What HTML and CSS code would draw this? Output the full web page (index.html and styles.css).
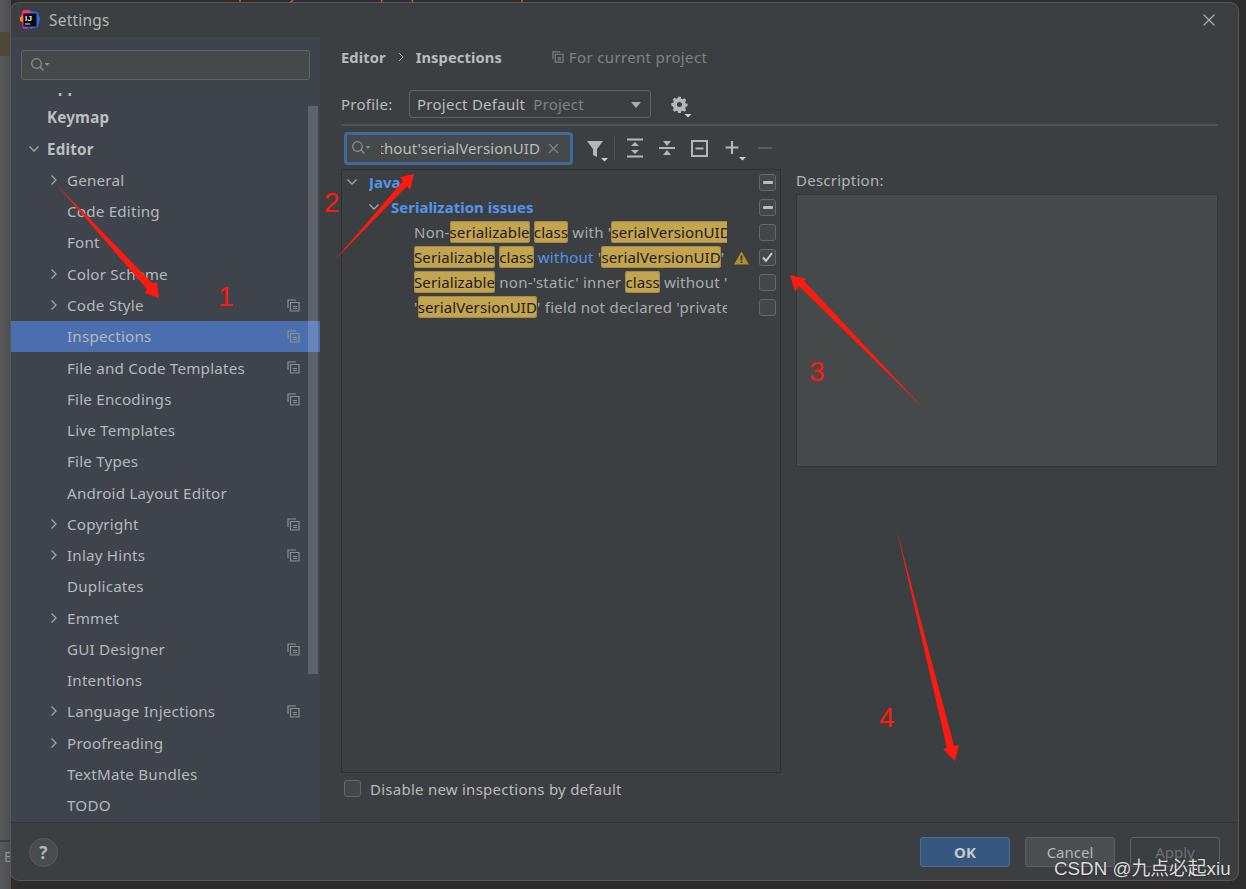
FILE: index.html
```html
<!DOCTYPE html>
<html lang="en">
<head>
<meta charset="utf-8">
<title>Settings</title>
<link rel="stylesheet" href="styles.css">
</head>
<body>
<div class="desk">
  <svg class="backdrop" width="1246" height="889" viewBox="0 0 1246 889">
    <rect x="0" y="32" width="11" height="24" fill="#4c4836"/>
    <path d="M240 0v3M293 0l-3 3M382 0l-1 3M412 0l1 3M522 0v3" stroke="#b5722f" stroke-width="1.5" fill="none"/>
    <path d="M0 841H11" stroke="#2b2d2e"/>
  </svg>
  <span class="stray">B</span>
  <div class="window">
    <header class="titlebar">
      <svg class="logo" width="20" height="20" viewBox="0 0 20 20">
        <path d="M3 0h6l3 2-9 14-1-4-2-1 1-5z" fill="#f0347c"/>
        <path d="M10 1l7 1 3 6-2 9-7 2-3-2z" fill="#2f6be8"/>
        <path d="M0 7l3-1v6l-3-1z" fill="#f58a1f"/>
        <path d="M2 15l5-2 1 6-5 0z" fill="#a535c9"/>
        <rect x="3.500" y="3.500" width="13" height="13" fill="#0b0b0b"/>
        <text x="5" y="11" class="logo-text">IJ</text>
        <rect x="5" y="13.500" width="5" height="1" fill="#e8e8e8"/>
      </svg>
      <span class="title">Settings</span>
      <svg class="close" width="14" height="14" viewBox="0 0 14 14"><path d="M1.500 1.500l11 11M12.500 1.500l-11 11" stroke="#a9abac" stroke-width="1.300" fill="none"/></svg>
    </header>
    <div class="main">
      <aside class="sidebar">
        <div class="side-search">
          <svg width="20" height="16" viewBox="0 0 20 16"><circle cx="6.500" cy="6.500" r="4.800" stroke="#8b8f91" stroke-width="1.200" fill="none"/><path d="M10 10l3.500 3.500" stroke="#8b8f91" stroke-width="1.300"/><path d="M14.500 6h5l-2.500 3z" fill="#8b8f91"/></svg>
        </div>
        <div class="tree-clip">
          <div class="thumb"></div>
          <ul class="tree">
            <li class="row top"><span class="label">Appearance &amp; Behavior</span></li>
            <li class="row top"><span class="label">Keymap</span></li>
            <li class="row top exp"><svg class="chev" viewBox="0 0 12 12"><path d="M1.500 3.500L6 8l4.500-4.500"/></svg><span class="label">Editor</span></li>
            <li class="row sub"><svg class="chev" viewBox="0 0 12 12"><path d="M3.500 1.500L8 6l-4.500 4.500"/></svg><span class="label">General</span></li>
            <li class="row leaf"><span class="label">Code Editing</span></li>
            <li class="row leaf"><span class="label">Font</span></li>
            <li class="row sub"><svg class="chev" viewBox="0 0 12 12"><path d="M3.500 1.500L8 6l-4.500 4.500"/></svg><span class="label">Color Scheme</span></li>
            <li class="row sub"><svg class="chev" viewBox="0 0 12 12"><path d="M3.500 1.500L8 6l-4.500 4.500"/></svg><span class="label">Code Style</span><svg class="copy" viewBox="0 0 13 13"><path d="M1 9V1h8"/><path d="M3.500 3.500h8.500v8.500H3.500z"/><path d="M6 7.500h4M6 9.500h4"/></svg></li>
            <li class="row leaf selected"><span class="label">Inspections</span><svg class="copy" viewBox="0 0 13 13"><path d="M1 9V1h8"/><path d="M3.500 3.500h8.500v8.500H3.500z"/><path d="M6 7.500h4M6 9.500h4"/></svg></li>
            <li class="row leaf"><span class="label">File and Code Templates</span><svg class="copy" viewBox="0 0 13 13"><path d="M1 9V1h8"/><path d="M3.500 3.500h8.500v8.500H3.500z"/><path d="M6 7.500h4M6 9.500h4"/></svg></li>
            <li class="row leaf"><span class="label">File Encodings</span><svg class="copy" viewBox="0 0 13 13"><path d="M1 9V1h8"/><path d="M3.500 3.500h8.500v8.500H3.500z"/><path d="M6 7.500h4M6 9.500h4"/></svg></li>
            <li class="row leaf"><span class="label">Live Templates</span></li>
            <li class="row leaf"><span class="label">File Types</span></li>
            <li class="row leaf"><span class="label">Android Layout Editor</span></li>
            <li class="row sub"><svg class="chev" viewBox="0 0 12 12"><path d="M3.500 1.500L8 6l-4.500 4.500"/></svg><span class="label">Copyright</span><svg class="copy" viewBox="0 0 13 13"><path d="M1 9V1h8"/><path d="M3.500 3.500h8.500v8.500H3.500z"/><path d="M6 7.500h4M6 9.500h4"/></svg></li>
            <li class="row sub"><svg class="chev" viewBox="0 0 12 12"><path d="M3.500 1.500L8 6l-4.500 4.500"/></svg><span class="label">Inlay Hints</span><svg class="copy" viewBox="0 0 13 13"><path d="M1 9V1h8"/><path d="M3.500 3.500h8.500v8.500H3.500z"/><path d="M6 7.500h4M6 9.500h4"/></svg></li>
            <li class="row leaf"><span class="label">Duplicates</span></li>
            <li class="row sub"><svg class="chev" viewBox="0 0 12 12"><path d="M3.500 1.500L8 6l-4.500 4.500"/></svg><span class="label">Emmet</span></li>
            <li class="row leaf"><span class="label">GUI Designer</span><svg class="copy" viewBox="0 0 13 13"><path d="M1 9V1h8"/><path d="M3.500 3.500h8.500v8.500H3.500z"/><path d="M6 7.500h4M6 9.500h4"/></svg></li>
            <li class="row leaf"><span class="label">Intentions</span></li>
            <li class="row sub"><svg class="chev" viewBox="0 0 12 12"><path d="M3.500 1.500L8 6l-4.500 4.500"/></svg><span class="label">Language Injections</span><svg class="copy" viewBox="0 0 13 13"><path d="M1 9V1h8"/><path d="M3.500 3.500h8.500v8.500H3.500z"/><path d="M6 7.500h4M6 9.500h4"/></svg></li>
            <li class="row sub"><svg class="chev" viewBox="0 0 12 12"><path d="M3.500 1.500L8 6l-4.500 4.500"/></svg><span class="label">Proofreading</span></li>
            <li class="row leaf"><span class="label">TextMate Bundles</span></li>
            <li class="row leaf"><span class="label">TODO</span></li>
          </ul>
        </div>
      </aside>
      <section class="content">
        <div class="crumbs">
          <b>Editor</b>
          <svg class="crumb-sep" width="6" height="10" viewBox="0 0 6 10"><path d="M1 1l4 4-4 4" stroke="#aaa" fill="none"/></svg>
          <b>Inspections</b>
          <span class="scope"><svg class="scope-icon" viewBox="0 0 13 13"><path d="M1 9V1h8"/><path d="M3.500 3.500h8.500v8.500H3.500z"/><path d="M6 7.500h4M6 9.500h4"/></svg>For current project</span>
        </div>
        <div class="profile">
          <span class="profile-label">Profile:</span>
          <div class="combo"><span>Project Default</span><span class="dim">Project</span><i class="caret"></i></div>
          <svg class="gear" width="22" height="22" viewBox="0 0 22 22">
            <path fill="#b4b7b9" fill-rule="evenodd" d="M9 2h3l.5 2.200 1.500.6 2-1.200 2 2-1.200 2 .6 1.500 2.100.5v3l-2.100.5-.6 1.500 1.200 2-2 2-2-1.200-1.500.6-.5 2.100H9l-.5-2.100-1.500-.6-2 1.200-2-2 1.200-2-.6-1.500L1.500 12V9l2.100-.5.6-1.500-1.200-2 2-2 2 1.200 1.500-.6zm1.500 5.700a2.800 2.800 0 1 0 0 5.600 2.800 2.800 0 0 0 0-5.600z" transform="translate(0 -1) scale(.9)"/>
            <path d="M14.500 18h7l-3.500 3.500z" fill="#d0d0d0"/>
          </svg>
        </div>
        <div class="rule"></div>
        <div class="toolbar">
          <div class="filter-input">
            <svg width="20" height="16" viewBox="0 0 20 16"><circle cx="6.500" cy="6.500" r="4.800" stroke="#8b8f91" stroke-width="1.200" fill="none"/><path d="M10 10l3.500 3.500" stroke="#8b8f91" stroke-width="1.300"/><path d="M14.500 6h5l-2.500 3z" fill="#8b8f91"/></svg>
            <span class="filter-clip"><span class="filter-text">Serializable class without'serialVersionUID</span></span>
            <svg class="clear" width="11" height="11" viewBox="0 0 11 11"><path d="M1 1l9 9M10 1l-9 9" stroke="#7f8385" stroke-width="1.200"/></svg>
          </div>
          <div class="tools">
            <svg width="22" height="24" viewBox="0 0 22 24"><path d="M1 3h16l-6 8v8l-4-2v-6z" fill="#b4b7b9"/><path d="M15 20h7l-3.500 3.500z" fill="#d0d0d0"/></svg>
            <span class="tool-sep"></span>
            <svg width="18" height="20" viewBox="0 0 18 20"><path d="M1 1.500h16M1 18.500h16" stroke="#b4b7b9" stroke-width="2"/><path d="M9 4l4 4H5zM9 16l4-4H5z" fill="#b4b7b9"/></svg>
            <svg width="18" height="20" viewBox="0 0 18 20"><path d="M1 10h16" stroke="#b4b7b9" stroke-width="2"/><path d="M9 8L5 3h8zM9 12l4 5H5z" fill="#b4b7b9"/></svg>
            <svg width="17" height="17" viewBox="0 0 17 17"><rect x="1" y="1" width="15" height="15" fill="none" stroke="#b4b7b9" stroke-width="2"/><path d="M4.500 8.500h8" stroke="#b4b7b9" stroke-width="2"/></svg>
            <svg width="22" height="24" viewBox="0 0 22 24"><path d="M8 3v13M1.500 9.500h13" stroke="#b4b7b9" stroke-width="2.200"/><path d="M15 19h7l-3.500 3.500z" fill="#d0d0d0"/></svg>
            <svg width="14" height="4" viewBox="0 0 14 4"><path d="M0 2h14" stroke="#5a5d5f" stroke-width="2"/></svg>
          </div>
        </div>
        <div class="panels">
          <div class="left-col">
            <div class="insp-tree">
              <div class="irow lvl0"><svg class="chev" viewBox="0 0 12 12"><path d="M1.500 3.500L6 8l4.500-4.500"/></svg><span class="ilabel blue strong">Java</span><span class="cb mixed"></span></div>
              <div class="irow lvl1"><svg class="chev" viewBox="0 0 12 12"><path d="M1.500 3.500L6 8l4.500-4.500"/></svg><span class="ilabel blue strong">Serialization issues</span><span class="cb mixed"></span></div>
              <div class="irow lvl2"><span class="ilabel">Non-<mark>serializable</mark> <mark>class</mark> with '<mark>serialVersionUID</mark>' but not Serializable</span><span class="cb"></span></div>
              <div class="irow lvl2"><span class="ilabel"><mark>Serializable</mark> <mark>class</mark> <span class="blue">without</span> '<mark>serialVersionUID</mark>'</span>
                <svg class="warn" width="15" height="14" viewBox="0 0 15 14"><path d="M7.500 .5L15 13.500H0z" fill="#b08d26"/><path d="M7.500 4.500v5M7.500 10.500v1.500" stroke="#2f2f2f" stroke-width="1.500"/></svg>
                <span class="cb"><svg width="15" height="15" viewBox="0 0 15 15"><path d="M3 7.500l3 3.500 6-8" fill="none" stroke="#c9cbcc" stroke-width="2"/></svg></span></div>
              <div class="irow lvl2"><span class="ilabel"><mark>Serializable</mark> non-'static' inner <mark>class</mark> without 'serialVersionUID'</span><span class="cb"></span></div>
              <div class="irow lvl2"><span class="ilabel">'<mark>serialVersionUID</mark>' field not declared 'private static final long'</span><span class="cb"></span></div>
            </div>
            <label class="disable"><span class="cb big"></span>Disable new inspections by default</label>
          </div>
          <div class="right-col">
            <div class="desc-label">Description:</div>
            <div class="desc-box"></div>
          </div>
        </div>
      </section>
    </div>
    <footer class="footer">
      <span class="help">?</span>
      <div class="buttons">
        <button class="btn primary">OK</button>
        <button class="btn">Cancel</button>
        <button class="btn off">Apply</button>
      </div>
    </footer>
  </div>
  <svg class="marks" width="1246" height="889" viewBox="0 0 1246 889">
    <polygon fill="#ff1a0f" points="55,183 152,283 157,283 159,298 145,293 147,289"/>
    <polygon fill="#ff1a0f" points="333,262 403,181 400,177 414,174 410,190 407,186"/>
    <polygon fill="#ff1a0f" points="925,410 799,286 795,292 790,275 806,279 804,281"/>
    <polygon fill="#ff1a0f" points="896,527 954,746 959,745 955,761 943,749 947,748"/>
  </svg>
  <span class="num n1">1</span>
  <span class="num n2">2</span>
  <span class="num n3">3</span>
  <span class="num n4">4</span>
  <span class="watermark">CSDN @九点必起xiu</span>
</div>
</body>
</html>
```
FILE: styles.css
```css
* { box-sizing: border-box; }
html, body { margin: 0; padding: 0; }
body { font-family: "Noto Sans", "Open Sans", "Noto Sans CJK SC", sans-serif; font-size: 15px; letter-spacing: .25px; color: #bbbbbb; }

.desk {
  position: relative; width: 1246px; height: 889px; overflow: hidden;
  padding: 3px 0 0 11px;
  background: linear-gradient(90deg, #56585a 0, #4c4e50 11px, #2f2d2b 11px, #2f2d2b 100%);
}
.backdrop { position: absolute; left: 0; top: 0; }
.stray { position: absolute; left: 4px; top: 847px; font-size: 14px; color: #8f9193; }

.window {
  position: relative; width: 1227px; height: 877px;
  display: flex; flex-direction: column;
  background: #3c3f41; border-radius: 8px; overflow: hidden;
  box-shadow: 0 0 0 1px #55585a;
}
.titlebar { height: 34px; flex: none; display: flex; align-items: center; padding: 0 22px 0 9px; }
.logo { flex: none; }
.logo-text { font: bold 8px "Liberation Sans", sans-serif; fill: #f2f2f2; }
.title { margin-left: 9px; font-size: 15.4px; color: #b4b6b8; }
.close { margin-left: auto; }

.main { flex: 1; min-height: 0; display: flex; }
.sidebar { width: 309px; flex: none; display: flex; flex-direction: column; background: #3e434c; }
.side-search {
  margin: 13px 10px 0; height: 30px; flex: none;
  display: flex; align-items: center; padding-left: 8px;
  background: #45494a; border: 1.5px solid #5f6364; border-radius: 3px;
}
.tree-clip { position: relative; margin-top: 13px; flex: 1; min-height: 0; overflow: hidden; }
.thumb {
  position: absolute; z-index: 2; left: 297px; top: 13px; width: 10px; height: 568px;
  background: rgba(255, 255, 255, .17);
}
.tree { list-style: none; margin: -22px 0 0; padding: 0; }
.row { height: 31.27px; display: flex; align-items: center; position: relative; white-space: nowrap; font-size: 15.2px; letter-spacing: .2px; }
.row.top { padding-left: 36px; }
.row.top .label { font-weight: 700; color: #bcbfc2; }
.row.sub, .row.leaf { padding-left: 56px; }
.row.selected { background: #4b6eaf; }
.label { color: #b6b9bc; line-height: 20px; margin-top: -1px; }
.chev { position: absolute; width: 12px; height: 12px; fill: none; stroke: #a3a6a8; stroke-width: 1.3; }
.row.sub .chev { left: 37px; top: 9px; }
.row.exp .chev { left: 17px; top: 9px; }
.copy { position: absolute; left: 276px; top: 9px; width: 13px; height: 13px; fill: none; stroke: #8c9093; stroke-width: 1.2; }

.content { flex: 1; min-width: 0; display: flex; flex-direction: column; padding: 9px 20px 0 21px; }
.crumbs { height: 22px; flex: none; display: flex; align-items: center; white-space: nowrap; }
.crumbs b { font-weight: 700; font-size: 14.7px; letter-spacing: .1px; color: #b9bcbe; }
.crumb-sep { margin: 0 12px; }
.scope { margin-left: 50px; display: flex; align-items: center; color: #7f8284; font-size: 15px; letter-spacing: .35px; }
.scope-icon { width: 12px; height: 12px; margin-right: 5px; fill: none; stroke: #7f8284; stroke-width: 1.2; }

.profile { margin-top: 22px; height: 28px; flex: none; display: flex; align-items: center; }
.profile-label { width: 68px; flex: none; }
.combo {
  width: 242px; height: 28px; display: flex; align-items: center; gap: 8px; padding: 0 7px;
  border: 1px solid #5e6162; border-radius: 3px; position: relative; white-space: nowrap;
}
.dim { color: #7f8284; }
.caret { position: absolute; right: 9px; top: 11px; border: 5.5px solid transparent; border-top: 6px solid #a9abad; border-bottom: 0; }
.gear { margin-left: 19px; margin-top: 6px; }
.rule { height: 2px; flex: none; margin-top: 6px; background: #505354; }

.toolbar { height: 34px; margin-top: 5px; flex: none; display: flex; align-items: center; }
.filter-input {
  width: 229px; height: 33px; margin-left: 3px; flex: none;
  display: flex; align-items: center; padding: 0 8px 0 4px;
  background: #45494a; border: 3px solid #3d6a96; border-radius: 4px;
}
.filter-input > svg:first-child { flex: none; }
.filter-clip { width: 159px; margin-left: 10px; flex: none; overflow: hidden; display: flex; justify-content: flex-end; white-space: nowrap; letter-spacing: .1px; }
.filter-text { color: #bbbbbb; flex: none; }
.clear { margin-left: 8px; flex: none; }
.tools { display: flex; align-items: center; margin-left: 13px; }
.tools svg:nth-child(1) { margin-right: 6px; margin-top: 4px; }
.tool-sep { width: 1px; height: 24px; background: #505354; margin-right: 11px; }
.tools svg:nth-child(3) { margin-right: 14px; }
.tools svg:nth-child(4) { margin-right: 15px; }
.tools svg:nth-child(5) { margin-right: 16px; }
.tools svg:nth-child(6) { margin-right: 12px; margin-top: 4px; }

.panels { flex: 1; min-height: 0; display: flex; gap: 15px; margin-top: 4px; }
.left-col { width: 440px; flex: none; display: flex; flex-direction: column; }
.insp-tree { height: 604px; flex: none; border: 1px solid #2f3133; }
.irow { height: 25px; position: relative; display: flex; align-items: center; white-space: nowrap; }
.lvl0 { padding-left: 27px; }
.lvl1 { padding-left: 49px; }
.lvl2 { padding-left: 72px; }
.lvl0 .chev { left: 4px; top: 6px; }
.lvl1 .chev { left: 26px; top: 6px; }
.ilabel { display: block; width: 313px; margin-top: -2px; overflow: hidden; white-space: nowrap; color: #a9acae; line-height: 22px; }
.lvl0 .ilabel, .lvl1 .ilabel { width: auto; }
.blue { color: #5394ec; }
.strong { font-weight: 700; letter-spacing: 0; }
mark {
  background: #c3a44f; color: #1c1c1c; border-radius: 3px; letter-spacing: .1px;
  box-shadow: inset 0 0 0 1px #a68a45; padding: 1px 0;
}
.cb {
  position: absolute; left: 417px; top: 4px; width: 17px; height: 17px;
  border: 1.5px solid #65686a; border-radius: 3px; background: #43474a;
  display: flex; align-items: center; justify-content: center;
}
.cb svg { flex: none; }
.cb.mixed::before { content: ""; width: 10px; height: 2.5px; border-radius: 1px; background: #b9bcbe; }
.warn { position: absolute; left: 392px; top: 6px; }
.disable { display: flex; align-items: center; gap: 9px; margin-top: 7px; height: 17px; white-space: nowrap; margin-left: 3px; }
.cb.big { position: static; flex: none; }

.right-col { flex: 1; min-width: 0; }
.desc-label { height: 25px; line-height: 23px; color: #b0b3b5; }
.desc-box { height: 273px; background: #45494a; border: 1px solid #333537; }

.footer { height: 58px; flex: none; position: relative; display: flex; align-items: center; padding: 1px 18px 0 18px; border-top: 1px solid #323436; }
.help {
  width: 29px; height: 29px; border-radius: 50%; flex: none;
  display: flex; align-items: center; justify-content: center;
  background: #494c4e; border: 1px solid #5a5d5f; color: #b4b7b9; font-weight: 700; font-size: 17px;
}
.buttons { margin-left: auto; display: flex; gap: 15px; }
.btn {
  width: 90px; height: 30px; padding: 0; font: inherit; font-size: 15px;
  border: 1px solid #5e6162; border-radius: 3px; background: #4a4e50; color: #b4b7b9;
}
.btn.primary { background: #365880; border-color: #4c708c; color: #c5c9cc; font-weight: 700; }
.btn.off { background: transparent; color: #6c6f71; }

.marks { position: absolute; left: 0; top: 0; pointer-events: none; }
.num { position: absolute; font-family: "Liberation Sans", sans-serif; font-size: 28px; letter-spacing: 0; color: #ff1a0f; line-height: 32px; }
.n1 { left: 218px; top: 281px; }
.n2 { left: 324px; top: 187px; }
.n3 { left: 809px; top: 356px; }
.n4 { left: 879px; top: 702px; }
.watermark { position: absolute; left: 1054px; top: 857px; font-family: "Liberation Sans", "Noto Sans CJK SC", sans-serif; font-size: 18.8px; letter-spacing: 0; line-height: 24px; color: #dcdcdc; white-space: nowrap; text-shadow: 0 0 2px #222; }
```
